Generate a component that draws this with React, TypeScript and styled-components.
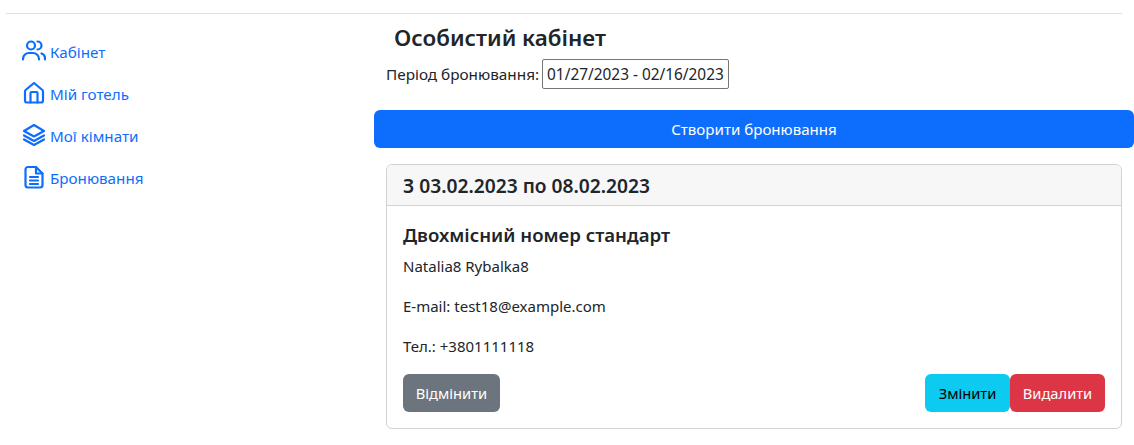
import React from "react";
import styled, { createGlobalStyle } from "styled-components";

const Global = createGlobalStyle`
  html, body { margin: 0; padding: 0; background: #fff; }
  body {
    font-family: "Noto Sans", "Open Sans", "Liberation Sans", sans-serif;
    font-size: 15px;
    line-height: 24px;
    color: #212529;
    overflow: hidden;
  }
`;

const Page = styled.div`
  width: 1134px;
  height: 445px;
  overflow: hidden;
`;
const Rule = styled.hr`
  margin: 13px 12px 0 6px;
  border: 0;
  border-top: 1px solid #dfdfdf;
`;
const Columns = styled.div`
  display: grid;
  grid-template-columns: 374px 760px;
`;
const Side = styled.nav`
  display: flex;
  flex-direction: column;
  gap: 18px;
  padding: 25px 0 0 22px;
`;
const NavLink = styled.a`
  display: flex;
  align-items: center;
  gap: 4px;
  height: 24px;
  color: #0d6efd;
  font-size: 15.2px;
  text-decoration: none;
  span { padding-top: 2px; line-height: 22px; }
`;
const Icon = styled.svg.attrs({ viewBox: "0 0 24 24" })`
  width: 24px;
  height: 24px;
  flex: none;
  fill: none;
  stroke: #0d6efd;
  stroke-width: 2.2;
  stroke-linecap: round;
  stroke-linejoin: round;
`;
const Main = styled.main`
  display: flex;
  flex-direction: column;
`;
const Title = styled.h1`
  margin: 9px 0 0 20px;
  font-size: 22.4px;
  line-height: 29px;
  font-weight: 600;
`;
const Period = styled.div`
  display: flex;
  align-items: center;
  gap: 3px;
  margin: 7px 0 0 12px;
  height: 30px;
  font-size: 15.3px;
`;
const DateInput = styled.input`
  width: 187px;
  height: 30px;
  box-sizing: border-box;
  padding: 1px 4px;
  border: 1px solid #767676;
  border-radius: 2px;
  font: inherit;
  font-size: 15.4px;
  color: #212529;
`;
const Btn = styled.button<{ $tone: "primary" | "secondary" | "info" | "danger"; $w?: number }>`
  height: 38px;
  width: ${(p) => (p.$w ? `${p.$w}px` : "auto")};
  padding: 0;
  border: 0;
  border-radius: 6px;
  font: inherit;
  font-size: 14.7px;
  color: ${(p) => (p.$tone === "info" ? "#000" : "#fff")};
  background: ${(p) =>
    ({ primary: "#0d6efd", secondary: "#6c757d", info: "#0dcaf0", danger: "#dc3545" })[p.$tone]};
`;
const WideBtn = styled(Btn)`
  margin-top: 21px;
  font-size: 15.1px;
`;
const Card = styled.section`
  margin: 16px 12px 0;
  height: 265px;
  box-sizing: border-box;
  border: 1px solid #d2d2d2;
  border-radius: 6px;
  display: flex;
  flex-direction: column;
  overflow: hidden;
`;
const CardHead = styled.header`
  height: 41px;
  box-sizing: border-box;
  padding: 1px 16px 0;
  display: flex;
  align-items: center;
  background: #f7f7f7;
  border-bottom: 1px solid #d2d2d2;
  font-size: 19.2px;
  font-weight: 600;
`;
const CardBody = styled.div`
  padding: 17px 16px 16px;
  display: flex;
  flex-direction: column;
`;
const CardTitle = styled.h5`
  margin: 0 0 7px;
  font-size: 18.6px;
  line-height: 24px;
  font-weight: 600;
`;
const Line = styled.p`
  margin: 0 0 16px;
`;
const Actions = styled.div`
  display: flex;
  justify-content: space-between;
`;
const Group = styled.div`
  display: flex;
`;

const PeopleIcon = () => (
  <Icon>
    <circle cx="9" cy="6.5" r="4" />
    <path d="M15.5 2.5a4 4 0 0 1 0 8" />
    <path d="M1 20.5V20a6 6 0 0 1 6-6h4a6 6 0 0 1 6 6v.5" />
    <path d="M19.5 14.5a5 5 0 0 1 3.5 5v1" />
  </Icon>
);
const HomeIcon = () => (
  <Icon>
    <path d="M12 2 3.6 9a2 2 0 0 0-.6 1.4V19.5a2 2 0 0 0 2 2h14a2 2 0 0 0 2-2V10.4a2 2 0 0 0-.6-1.4Z" />
    <path d="M8.5 21.5V12a1 1 0 0 1 1-1h5a1 1 0 0 1 1 1v9.5" />
  </Icon>
);
const LayersIcon = () => (
  <Icon>
    <path d="M12 2 22 8 12 13.5 2 8Z" />
    <path d="M2 12.5 12 18l10-5.5" />
    <path d="M2 16.5 12 22l10-5.5" />
  </Icon>
);
const FileIcon = () => (
  <Icon>
    <path d="M14 2H6a2.5 2.5 0 0 0-2.5 2.5V20A2.5 2.5 0 0 0 6 22.5h12a2.5 2.5 0 0 0 2.5-2.5V8.5Z" />
    <path d="M14 2v6.5h6.5" />
    <path d="M8 12h8M8 15.5h8M8 19h8" />
  </Icon>
);

export default function App() {
  return (
    <Page>
      <Global />
      <Rule />
      <Columns>
        <Side>
          <NavLink href="#"><PeopleIcon /><span>Кабінет</span></NavLink>
          <NavLink href="#"><HomeIcon /><span>Мій готель</span></NavLink>
          <NavLink href="#"><LayersIcon /><span>Мої кімнати</span></NavLink>
          <NavLink href="#"><FileIcon /><span>Бронювання</span></NavLink>
        </Side>
        <Main>
          <Title>Особистий кабінет</Title>
          <Period>
            Період бронювання:
            <DateInput readOnly value="01/27/2023 - 02/16/2023" />
          </Period>
          <WideBtn $tone="primary" $w={760}>Створити бронювання</WideBtn>
          <Card>
            <CardHead>З 03.02.2023 по 08.02.2023</CardHead>
            <CardBody>
              <CardTitle>Двохмісний номер стандарт</CardTitle>
              <Line>Natalia8 Rybalka8</Line>
              <Line>E-mail: test18@example.com</Line>
              <Line>Тел.: +3801111118</Line>
              <Actions>
                <Btn $tone="secondary" $w={97}>Відмінити</Btn>
                <Group>
                  <Btn $tone="info" $w={85}>Змінити</Btn>
                  <Btn $tone="danger" $w={95}>Видалити</Btn>
                </Group>
              </Actions>
            </CardBody>
          </Card>
        </Main>
      </Columns>
    </Page>
  );
}
